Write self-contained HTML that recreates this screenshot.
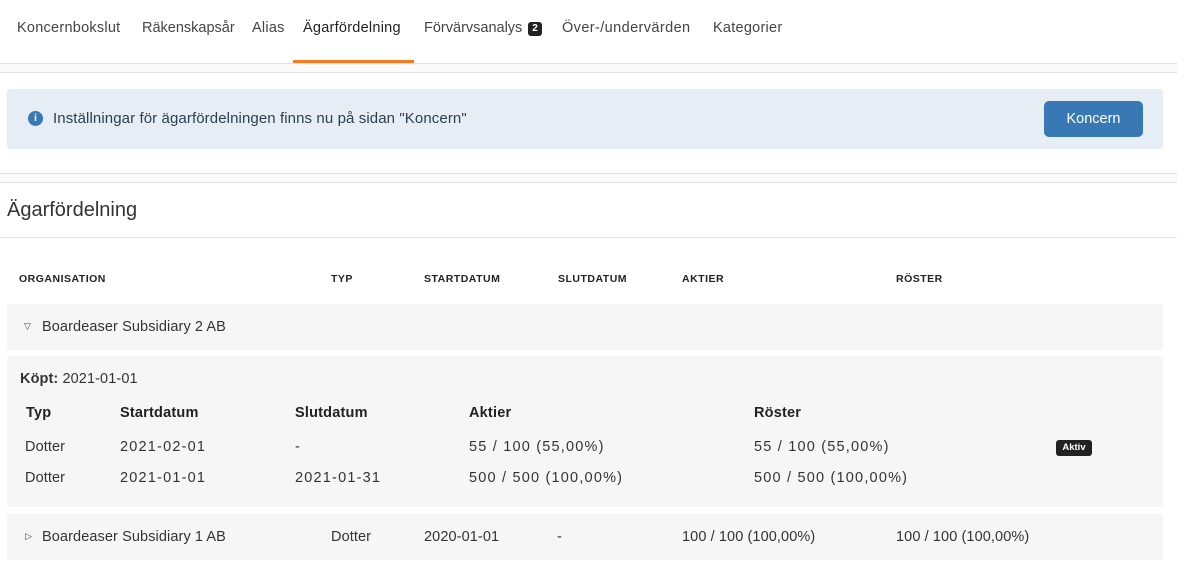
<!DOCTYPE html>
<html><head><meta charset="utf-8"><style>
*{margin:0;padding:0;box-sizing:border-box}
body{width:1177px;height:568px;background:#fff;font-family:"Liberation Sans",sans-serif;color:#333;position:relative;overflow:hidden}
.a{position:absolute;white-space:nowrap}
.nav{top:20px;font-size:14.5px;color:#444;letter-spacing:0.25px}
.h{top:273px;font-size:10.5px;font-weight:bold;color:#222;letter-spacing:0.5px}
.t{font-size:14.5px;color:#333;letter-spacing:0.1px}
.m{font-size:14.5px;color:#333;letter-spacing:1.2px}
.b{font-size:14.5px;font-weight:bold;color:#222;letter-spacing:0.2px}
</style></head><body>
<div class="a nav" style="left:17px">Koncernbokslut</div>
<div class="a nav" style="left:142px;letter-spacing:0">Räkenskapsår</div>
<div class="a nav" style="left:252px">Alias</div>
<div class="a nav" style="left:303px;color:#222">Ägarfördelning</div>
<div class="a nav" style="left:424px;letter-spacing:0">Förvärvsanalys</div>
<div class="a" style="left:528px;top:22px;width:14px;height:14px;background:#222;border-radius:3px;color:#fff;font-size:10px;font-weight:bold;text-align:center;line-height:14px">2</div>
<div class="a nav" style="left:562px;letter-spacing:0.4px">Över-/undervärden</div>
<div class="a nav" style="left:713px">Kategorier</div>
<div class="a" style="left:293px;top:60px;width:121px;height:3px;background:#f47c20"></div>
<div class="a" style="left:0;top:63px;width:1177px;height:10px;background:#fafafa;border-top:1px solid #e2e2e2;border-bottom:1px solid #e2e2e2"></div>

<div class="a" style="left:7px;top:89px;width:1156px;height:60px;background:#e6edf5;border-radius:3px"></div>
<div class="a" style="left:28px;top:111px;width:15px;height:15px;border-radius:50%;background:#3878b5;color:#fff;font-size:10px;font-weight:bold;text-align:center;line-height:15px">i</div>
<div class="a" style="left:53px;top:110px;font-size:15px;color:#2c3e50;letter-spacing:0.1px">Inställningar för ägarfördelningen finns nu på sidan "Koncern"</div>
<div class="a" style="left:1044px;top:101px;width:99px;height:36px;background:#3878b5;border-radius:5px;color:#fff;font-size:14.5px;text-align:center;line-height:36px">Koncern</div>

<div class="a" style="left:0;top:173px;width:1177px;height:10px;background:#fafafa;border-top:1px solid #e2e2e2;border-bottom:1px solid #e2e2e2"></div>
<div class="a" style="left:7px;top:199px;font-size:20px;color:#333">Ägarfördelning</div>
<div class="a" style="left:0;top:237px;width:1177px;height:1px;background:#e2e2e2"></div>

<div class="a h" style="left:19px">ORGANISATION</div>
<div class="a h" style="left:331px">TYP</div>
<div class="a h" style="left:424px">STARTDATUM</div>
<div class="a h" style="left:558px">SLUTDATUM</div>
<div class="a h" style="left:682px">AKTIER</div>
<div class="a h" style="left:896px">RÖSTER</div>

<div class="a" style="left:7px;top:304px;width:1156px;height:46px;background:#f6f6f6"></div>
<div class="a" style="left:24px;top:321px;font-size:9px;color:#444">▽</div>
<div class="a t" style="left:42px;top:319px">Boardeaser Subsidiary 2 AB</div>

<div class="a" style="left:7px;top:356px;width:1156px;height:151px;background:#f6f6f6"></div>
<div class="a t" style="left:20px;top:371px"><b>Köpt:</b> 2021-01-01</div>
<div class="a b" style="left:26px;top:405px">Typ</div>
<div class="a b" style="left:120px;top:405px">Startdatum</div>
<div class="a b" style="left:295px;top:405px">Slutdatum</div>
<div class="a b" style="left:469px;top:405px">Aktier</div>
<div class="a b" style="left:754px;top:405px">Röster</div>
<div class="a t" style="left:25px;top:439px">Dotter</div>
<div class="a m" style="left:120px;top:439px">2021-02-01</div>
<div class="a m" style="left:295px;top:439px">-</div>
<div class="a m" style="left:469px;top:439px">55 / 100 (55,00%)</div>
<div class="a m" style="left:754px;top:439px">55 / 100 (55,00%)</div>
<div class="a" style="left:1056px;top:440px;width:36px;height:16px;background:#222;border-radius:3px;color:#fff;font-size:9.5px;font-weight:bold;text-align:center;line-height:16px">Aktiv</div>
<div class="a t" style="left:25px;top:470px">Dotter</div>
<div class="a m" style="left:120px;top:470px">2021-01-01</div>
<div class="a m" style="left:295px;top:470px">2021-01-31</div>
<div class="a m" style="left:469px;top:470px">500 / 500 (100,00%)</div>
<div class="a m" style="left:754px;top:470px">500 / 500 (100,00%)</div>

<div class="a" style="left:7px;top:514px;width:1156px;height:46px;background:#f6f6f6"></div>
<div class="a" style="left:25px;top:531px;font-size:9px;color:#444">▷</div>
<div class="a t" style="left:42px;top:529px">Boardeaser Subsidiary 1 AB</div>
<div class="a t" style="left:331px;top:529px">Dotter</div>
<div class="a t" style="left:424px;top:529px">2020-01-01</div>
<div class="a t" style="left:557px;top:529px">-</div>
<div class="a t" style="left:682px;top:529px">100 / 100 (100,00%)</div>
<div class="a t" style="left:896px;top:529px">100 / 100 (100,00%)</div>
</body></html>
